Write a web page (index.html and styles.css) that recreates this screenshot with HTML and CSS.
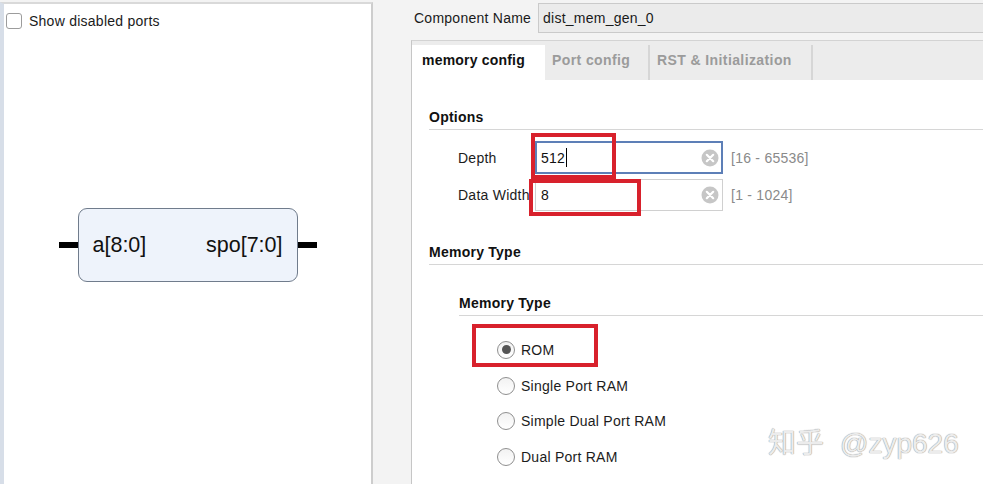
FILE: index.html
```html
<!DOCTYPE html>
<html>
<head>
<meta charset="utf-8">
<link rel="stylesheet" href="styles.css">
</head>
<body>
<div class="app">
  <section class="left">
    <label class="chk"><span class="box"></span>Show disabled ports</label>
    <div class="canvas">
      <div class="pin"></div>
      <div class="ip"><span>a[8:0]</span><span>spo[7:0]</span></div>
      <div class="pin"></div>
    </div>
  </section>
  <section class="right">
    <div class="name-row">
      <span class="name-label">Component Name</span>
      <div class="name-input">dist_mem_gen_0</div>
    </div>
    <div class="tabs">
      <div class="tabbar">
        <div class="tab active">memory config</div>
        <div class="tab t2">Port config</div>
        <div class="tab t3">RST &amp; Initialization</div>
      </div>
      <div class="content">
        <div class="section-title">Options</div>
        <div class="form">
          <span class="lbl">Depth</span>
          <div class="field focus"><span class="val">512<span class="caret"></span></span>
            <svg class="clear" viewBox="0 0 18 18" width="18" height="18"><circle cx="9" cy="9" r="8.5" fill="#c6c6c6"/><path d="M5.8 5.8 L12.2 12.2 M12.2 5.8 L5.8 12.2" stroke="#fff" stroke-width="2.2" stroke-linecap="round"/></svg>
          </div>
          <span class="range">[16 - 65536]</span>
          <span class="lbl">Data Width</span>
          <div class="field"><span class="val">8</span>
            <svg class="clear" viewBox="0 0 18 18" width="18" height="18"><circle cx="9" cy="9" r="8.5" fill="#c6c6c6"/><path d="M5.8 5.8 L12.2 12.2 M12.2 5.8 L5.8 12.2" stroke="#fff" stroke-width="2.2" stroke-linecap="round"/></svg>
          </div>
          <span class="range">[1 - 1024]</span>
        </div>
        <div class="section-title mt">Memory Type</div>
        <div class="section-title inner">Memory Type</div>
        <div class="radios">
          <div class="radio-row"><span class="radio on"></span>ROM</div>
          <div class="radio-row"><span class="radio"></span>Single Port RAM</div>
          <div class="radio-row"><span class="radio"></span>Simple Dual Port RAM</div>
          <div class="radio-row"><span class="radio"></span>Dual Port RAM</div>
        </div>
        <div class="mark mark-depth"></div>
        <div class="mark mark-width"></div>
        <div class="mark mark-rom"></div>
      </div>
    </div>
  </section>
  <div class="watermark"><span class="wm-cn">知乎</span>@zyp626</div>
</div>
</body>
</html>
```
FILE: styles.css
```css
* { box-sizing: border-box; }
html, body { margin: 0; padding: 0; }
body {
  font-family: "Liberation Sans", Arial, sans-serif;
  font-size: 14px;
  letter-spacing: 0.25px;
  color: #1c1c1c;
  background: #f3f3f3;
}
.app {
  position: relative;
  display: flex;
  width: 983px;
  height: 484px;
  overflow: hidden;
  background: #f3f3f3;
}

/* left panel */
.left {
  width: 373px;
  flex: none;
  display: flex;
  flex-direction: column;
  background: #fff;
  margin-top: 2px;
  border-top: 2px solid #d9d9d9;
  border-left: 4px solid #d7dee8;
  border-right: 2px solid #cdcdcd;
}
.chk {
  display: flex;
  align-items: center;
  gap: 7px;
  height: 30px;
  margin-top: 2px;
  padding-left: 2px;
  color: #1a1a1a;
}
.box {
  width: 16px;
  height: 16px;
  border: 1.5px solid #9c9c9c;
  border-radius: 3px;
  background: #fff;
}
.canvas {
  flex: 1;
  display: flex;
  align-items: center;
  justify-content: center;
  padding-bottom: 30px;
}
.pin {
  width: 19px;
  height: 6px;
  background: #000;
}
.ip {
  width: 220px;
  height: 74px;
  border: 1px solid #707c8c;
  border-radius: 9px;
  background: #eef3fb;
  display: flex;
  align-items: center;
  justify-content: space-between;
  padding: 0 14px 0 14px;
  font-size: 21.5px;
  letter-spacing: 0;
  color: #111;
}

/* right panel */
.right {
  flex: 1;
  display: flex;
  flex-direction: column;
  padding-left: 38px;
}
.name-row {
  display: flex;
  align-items: center;
  height: 30px;
  margin-top: 3px;
}
.name-label {
  width: 127px;
  padding-left: 3px;
  color: #1a1a1a;
}
.name-input {
  flex: 1;
  height: 30px;
  line-height: 28px;
  background: #ebebeb;
  border: 1px solid #cacaca;
  border-right: none;
  padding-left: 4px;
  color: #1a1a1a;
}
.tabs {
  flex: 1;
  display: flex;
  flex-direction: column;
  margin-top: 7px;
  border-left: 1px solid #c6c6c6;
  border-top: 1px solid #d3d3d3;
}
.tabbar {
  display: flex;
  height: 39px;
  background: #ececec;
  padding-top: 4px;
}
.tab {
  display: flex;
  align-items: center;
  padding: 0 0 5px 7px;
  font-weight: bold;
  letter-spacing: 0.4px;
  color: #9b9b9b;
}
.tab.active {
  width: 133px;
  padding-left: 10px;
  background: #fff;
  color: #111;
  letter-spacing: 0.2px;
}
.tab.t2 { width: 105px; border-right: 2px solid #d6d6d6; }
.tab.t3 { width: 163px; border-right: 2px solid #d6d6d6; }
.content {
  flex: 1;
  position: relative;
  background: #fff;
  padding-top: 28px;
}
.section-title {
  margin-left: 17px;
  line-height: 18px;
  padding-bottom: 3px;
  border-bottom: 1px solid #d6d6d6;
  font-weight: bold;
  color: #111;
}
.section-title.mt { margin-top: 32px; }
.section-title.inner { margin-left: 47px; margin-top: 29px; }

.form {
  display: grid;
  grid-template-columns: 77px 188px auto;
  row-gap: 5px;
  align-items: center;
  margin: 11px 0 0 46px;
}
.lbl { color: #1c1c1c; }
.field {
  height: 32px;
  border: 1px solid #d0d0d0;
  background: #fff;
  display: flex;
  align-items: center;
  justify-content: space-between;
  padding: 0 3px 0 5px;
}
.field.focus {
  height: 33px;
  border: 2px solid #5d7fb7;
  padding: 0 2px 0 4px;
}
.val { display: flex; align-items: center; color: #111; }
.caret {
  display: inline-block;
  width: 1px;
  height: 19px;
  background: #000;
  margin-left: 1px;
}
.clear { display: block; }
.range {
  margin-left: 8px;
  color: #8a8a8a;
}

.radios {
  margin: 16px 0 0 85px;
}
.radio-row {
  display: flex;
  align-items: center;
  gap: 6px;
  height: 35.7px;
  color: #1c1c1c;
}
.radio {
  width: 18px;
  height: 18px;
  border-radius: 50%;
  border: 1px solid #8f8f8f;
  background: linear-gradient(#f2f2f2, #fff);
  display: flex;
  align-items: center;
  justify-content: center;
}
.radio.on::after {
  content: "";
  width: 9px;
  height: 9px;
  border-radius: 50%;
  background: #555;
}

/* red annotation boxes drawn over the form */
.mark {
  position: absolute;
  border: 4px solid #d8212c;
}
.mark-depth { left: 119px; top: 53px; width: 85px; height: 46px; }
.mark-width { left: 117px; top: 99px; width: 112px; height: 37px; }
.mark-rom { left: 60px; top: 244px; width: 126px; height: 43px; }

.watermark {
  position: absolute;
  left: 768px;
  top: 421px;
  font-size: 28px;
  letter-spacing: 0;
  color: #ececec;
  text-shadow: 0 0 1px #9a9a9a, 0 0 1px #9a9a9a;
  font-family: "Liberation Sans", "Noto Sans CJK SC", sans-serif;
  white-space: nowrap;
}
.wm-cn { margin-right: 16px; }
```
